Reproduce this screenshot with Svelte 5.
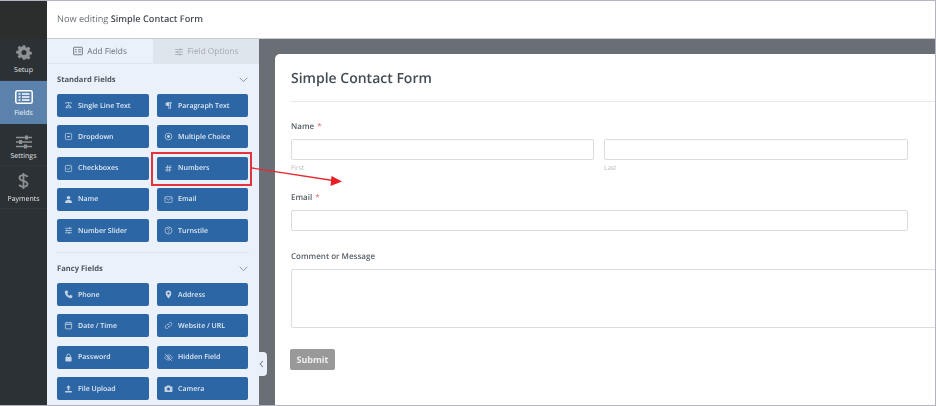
<script>
  const icons = {
    text: '<path d="M3 5V3h10v2M8 3v4M5 8h6M3 11l2 2 0-4zM13 11l-2 2 0-4zM5 11h6" fill="none" stroke="currentColor" stroke-width="1.3"/>',
    para: '<path d="M6 2h8v2h-1.500v10H11V4H9.500v10H8V9H6a3.500 3.500 0 0 1 0-7z" fill="currentColor"/>',
    drop: '<rect x="2.500" y="2.500" width="11" height="11" rx="1.500" fill="none" stroke="currentColor" stroke-width="1.300"/><path d="M5 7h6l-3 3z" fill="currentColor"/>',
    radio: '<circle cx="8" cy="8" r="6" fill="none" stroke="currentColor" stroke-width="1.300"/><circle cx="8" cy="8" r="2.600" fill="currentColor"/>',
    check: '<rect x="2.500" y="2.500" width="11" height="11" rx="1.500" fill="none" stroke="currentColor" stroke-width="1.300"/><path d="M5 8l2.200 2.200L11.500 6" fill="none" stroke="currentColor" stroke-width="1.300"/>',
    hash: '<path d="M6.500 2L5 14M11 2L9.500 14M2.500 6h11M2 10.500h11" fill="none" stroke="currentColor" stroke-width="1.400"/>',
    user: '<circle cx="8" cy="4.800" r="3.200" fill="currentColor"/><path d="M2 14v-1.500C2 10.300 4 9 6 9h4c2 0 4 1.300 4 3.500V14z" fill="currentColor"/>',
    mail: '<rect x="1.500" y="3" width="13" height="10" rx="1.200" fill="none" stroke="currentColor" stroke-width="1.200"/><path d="M2 4.500l6 4.500 6-4.500" fill="none" stroke="currentColor" stroke-width="1.200"/>',
    slider: '<path d="M2 4h12M2 8h12M2 12h12" stroke="currentColor" stroke-width="1.300"/><rect x="9" y="2.500" width="2" height="3" fill="currentColor"/><rect x="4" y="6.500" width="2" height="3" fill="currentColor"/><rect x="8" y="10.500" width="2" height="3" fill="currentColor"/>',
    help: '<circle cx="8" cy="8" r="6.200" fill="none" stroke="currentColor" stroke-width="1.300"/><path d="M6 6.500a2 2 0 1 1 3 1.700c-.7.400-1 .8-1 1.500" fill="none" stroke="currentColor" stroke-width="1.200"/><circle cx="8" cy="11.500" r=".8" fill="currentColor"/>',
    phone: '<path d="M3 1.500l3-.5 1.500 3.500L5.800 6c.7 1.700 2.400 3.400 4.200 4.200l1.500-1.700L15 10l-.5 3c-.1.800-.8 1.500-1.700 1.500C6.800 14.500 1.500 9.200 1.500 3.200c0-.9.700-1.600 1.500-1.700z" fill="currentColor"/>',
    pin: '<path fill-rule="evenodd" d="M8 1a5 5 0 0 1 5 5c0 3.200-3.500 7-5 9-1.500-2-5-5.800-5-9a5 5 0 0 1 5-5zm0 3a2 2 0 1 0 0 4 2 2 0 0 0 0-4z" fill="currentColor"/>',
    cal: '<rect x="2.500" y="3" width="11" height="11" rx="1.200" fill="none" stroke="currentColor" stroke-width="1.400"/><path d="M2.500 6h11M5 1.500V4M11 1.500V4" stroke="currentColor" stroke-width="1.500"/>',
    link: '<path d="M7 9.500a2.700 2.700 0 0 0 3.800 0l2.500-2.500a2.700 2.700 0 0 0-3.800-3.800L8.300 4.400M9 6.500a2.700 2.700 0 0 0-3.800 0L2.700 9a2.700 2.700 0 0 0 3.800 3.800l1.200-1.200" fill="none" stroke="currentColor" stroke-width="1.300"/>',
    lock: '<rect x="2.500" y="7" width="11" height="8" rx="1.200" fill="currentColor"/><path d="M5 7.500V5a3 3 0 0 1 6 0v2.500" fill="none" stroke="currentColor" stroke-width="1.600"/>',
    hidden: '<path d="M1 8c2-3 4.300-4.500 7-4.500S13 5 15 8c-2 3-4.300 4.500-7 4.500S3 11 1 8z" fill="none" stroke="currentColor" stroke-width="1.200"/><circle cx="8" cy="8" r="2.200" fill="none" stroke="currentColor" stroke-width="1.200"/><path d="M2 2l12 12" stroke="currentColor" stroke-width="1.300"/>',
    upload: '<path d="M8 2l4 4H9.500v5h-3V6H4zM2 12.500h12V15H2z" fill="currentColor"/>',
    camera: '<path fill-rule="evenodd" d="M5.500 2.500h5l1 2H14a1 1 0 0 1 1 1V13a1 1 0 0 1-1 1H2a1 1 0 0 1-1-1V5.500a1 1 0 0 1 1-1h2.500zM8 6a2.800 2.800 0 1 0 0 5.600A2.800 2.800 0 0 0 8 6z" fill="currentColor"/>'
  };
  const standard = [
    ['text', 'Single Line Text'], ['para', 'Paragraph Text'],
    ['drop', 'Dropdown'], ['radio', 'Multiple Choice'],
    ['check', 'Checkboxes'], ['hash', 'Numbers'],
    ['user', 'Name'], ['mail', 'Email'],
    ['slider', 'Number Slider'], ['help', 'Turnstile']
  ];
  const fancy = [
    ['phone', 'Phone'], ['pin', 'Address'],
    ['cal', 'Date / Time'], ['link', 'Website / URL'],
    ['lock', 'Password'], ['hidden', 'Hidden Field'],
    ['upload', 'File Upload'], ['camera', 'Camera']
  ];
</script>

<div class="shot">
  <nav class="side">
    <div class="brand"></div>
    <div class="item setup">
      <svg width="16" height="16" viewBox="0 0 24 24"><path fill-rule="evenodd" fill="#8d9194" d="M10 1h4l.6 3.100 2 .9 2.700-1.700 2.800 2.800-1.700 2.700.9 2 3.100.6v4l-3.100.6-.9 2 1.700 2.700-2.800 2.800-2.700-1.700-2 .9L14 24h-4l-.6-3.100-2-.9-2.700 1.700-2.800-2.800 1.700-2.700-.9-2L-.4 14v-4l3.100-.6.9-2L1.900 4.700 4.700 1.900l2.700 1.700 2-.9zM12 8.500a4 4 0 1 0 0 8 4 4 0 0 0 0-8z" transform="translate(.6 -.5) scale(.95)"/></svg>
      <span>Setup</span>
    </div>
    <div class="item active">
      <svg width="18" height="14" viewBox="0 0 18 14"><rect x=".8" y=".8" width="16.400" height="12.400" rx="1.500" fill="none" stroke="#fff" stroke-width="1.500"/><path d="M3.500 4h2M7 4h7.500M3.500 7h2M7 7h7.500M3.500 10h2M7 10h7.500" stroke="#fff" stroke-width="1.400"/></svg>
      <span>Fields</span>
    </div>
    <div class="item settings">
      <svg width="16" height="16" viewBox="0 0 16 16"><path d="M0 3.500h16M0 8h16M0 12.500h16" stroke="#8d9194" stroke-width="1.400"/><rect x="9" y="1.500" width="3" height="4" fill="#8d9194"/><rect x="3" y="6" width="3" height="4" fill="#8d9194"/><rect x="8" y="10.500" width="3" height="4" fill="#8d9194"/></svg>
      <span>Settings</span>
    </div>
    <div class="item tall">
      <svg width="11" height="16" viewBox="0 0 12 18"><path d="M6 0v18M10.500 4.500C9.800 3 8 2.500 6 2.500 3.500 2.500 1.500 3.500 1.500 5.500c0 4.500 9 2.300 9 7 0 2-2 3-4.500 3-2.200 0-4-.8-4.800-2.500" fill="none" stroke="#8d9194" stroke-width="2"/></svg>
      <span>Payments</span>
    </div>
  </nav>

  <div class="main">
    <header class="top">Now editing <b>Simple Contact Form</b></header>
    <div class="body">
      <aside class="panel">
        <div class="tabs">
          <div class="tab on">
            <svg width="10" height="10" viewBox="0 0 16 16"><rect x="1" y="2" width="14" height="12" rx="1" fill="none" stroke="currentColor" stroke-width="1.500"/><path d="M3 6h3M8 6h5M3 9.500h3M8 9.500h5" stroke="currentColor" stroke-width="1.500"/></svg>
            Add Fields
          </div>
          <div class="tab">
            <svg width="10" height="10" viewBox="0 0 16 16" class="dim">{@html icons.slider}</svg>
            Field Options
          </div>
        </div>
        <div class="fields">
          <div class="head"><span>Standard Fields</span><svg width="9" height="6" viewBox="0 0 9 6"><path d="M.7.8L4.500 4.600 8.300.8" fill="none" stroke="#8b96a1" stroke-width="1"/></svg></div>
          <div class="grid">
            {#each standard as [icon, label]}
              <div class="btn"><svg width="9" height="9" viewBox="0 0 16 16">{@html icons[icon]}</svg>{label}</div>
            {/each}
          </div>
          <div class="rule"></div>
          <div class="head fancy"><span>Fancy Fields</span><svg width="9" height="6" viewBox="0 0 9 6"><path d="M.7.8L4.500 4.600 8.300.8" fill="none" stroke="#8b96a1" stroke-width="1"/></svg></div>
          <div class="grid">
            {#each fancy as [icon, label]}
              <div class="btn"><svg width="9" height="9" viewBox="0 0 16 16">{@html icons[icon]}</svg>{label}</div>
            {/each}
          </div>
        </div>
      </aside>
      <section class="canvas">
        <div class="card">
          <h1>Simple Contact Form</h1>
          <div class="form">
            <div class="label first">Name <i>*</i></div>
            <div class="pair">
              <div><div class="input"></div><small>First</small></div>
              <div><div class="input"></div><small>Last</small></div>
            </div>
            <div class="label email">Email <i>*</i></div>
            <div class="input wide"></div>
            <div class="label comment">Comment or Message</div>
            <div class="area"></div>
            <div class="submit">Submit</div>
          </div>
        </div>
      </section>
    </div>
  </div>

  <div class="toggle">
    <svg width="5" height="8" viewBox="0 0 5 8"><path d="M4 .8L1 4l3 3.200" fill="none" stroke="#8b96a1" stroke-width="1.100"/></svg>
  </div>
  <div class="mark"></div>
  <svg class="arrow" width="100" height="24" viewBox="0 0 100 24">
    <path d="M1 2L82 14.500" stroke="#ea2a33" stroke-width="1.300"/>
    <path d="M91 15.500L79.500 20l1-10z" fill="#ea1c26"/>
  </svg>
  <div class="frame"></div>
</div>

<style>
  :global(body) { margin: 0; background: #fff; }
  .shot {
    position: relative; width: 936px; height: 406px; overflow: hidden; display: flex;
    font-family: "Open Sans", "Liberation Sans", sans-serif; color: #444c55;
    text-rendering: geometricPrecision; filter: blur(0.35px);
  }
  .frame {
    position: absolute; inset: 0; border: solid #b5b4bf; border-width: 1px 1px 1px 0; pointer-events: none;
  }
  .side { width: 47px; flex: none; background: #2b3135; display: flex; flex-direction: column; }
  .brand { height: 39px; background: #2c2d2d; }
  .item {
    height: 42px; display: flex; flex-direction: column; align-items: center; justify-content: flex-end;
    box-sizing: border-box; font-size: 7px; line-height: 10px; font-weight: 500;
    color: #e4e6e7; border-bottom: 1px solid #32383c;
  }
  .setup { gap: 5px; padding-bottom: 4px; }
  .active { background: #5a82ad; color: #f2f6fa; height: 43px; border-bottom: 0; padding-bottom: 5px; gap: 5px; }
  .settings { padding-bottom: 3px; gap: 2px; }
  .tall { height: 43px; padding-bottom: 3px; gap: 6px; }
  .main { flex: 1; min-width: 0; display: flex; flex-direction: column; }
  .top {
    height: 39px; flex: none; box-sizing: border-box; padding: 12px 0 0 10px; font-size: 9.2px; line-height: 14px;
    color: #6b6f73; background: #fff; border-bottom: 1px solid #c9cbce;
  }
  .top b { color: #444c55; font-weight: 600; }
  .body { flex: 1; display: flex; min-height: 0; }
  .panel { width: 212px; flex: none; background: #ebf1fa; display: flex; flex-direction: column; }
  .tabs { display: grid; grid-template-columns: 106px 106px; height: 25px; flex: none; }
  .tab {
    display: flex; align-items: center; justify-content: center; gap: 4px; font-size: 8.3px;
    color: #a3aab2; background: #dfe5ec; font-weight: 500;
  }
  .tab svg { color: #a3aab2; }
  .tab.on { background: #ebf1fa; color: #6c747c; border-bottom: 1px solid #e0e6ee; }
  .tab.on svg { color: #6c747c; }
  .fields { padding: 0 10px; }
  .head {
    display: flex; justify-content: space-between; align-items: center; height: 14px; margin-top: 8px;
    margin-bottom: 8px; font-size: 7.6px; font-weight: 700; color: #4e555c; padding-right: 1px;
    box-sizing: border-box; padding-top: 1px;
  }
  .head.fancy { margin-top: 8px; margin-bottom: 8px; }
  .grid { display: grid; grid-template-columns: 92px 91px; column-gap: 8px; row-gap: 8.3px; }
  .btn {
    height: 23px; background: #2d66a5; border-radius: 2px; color: #dfe9f3; font-size: 7px; font-weight: 600;
    display: flex; align-items: center; gap: 5px; padding: 1px 0 0 7px; box-sizing: border-box; white-space: nowrap;
  }
  .btn svg { flex: none; color: #c3d3e4; margin-top: -1px; }
  .rule { height: 1px; background: #dce3ea; margin-top: 10px; }
  .canvas { flex: 1; min-width: 0; background: #6a6f76; padding: 15px 0 0 16px; border-bottom: 1px solid #6a6f76; }
  .card { background: #fff; height: 352px; border-radius: 5px 0 0 0; padding-left: 16px; box-sizing: border-box; }
  h1 {
    margin: 0; height: 48px; box-sizing: border-box; padding-top: 15px; font-size: 14px; line-height: 20px;
    font-weight: 600; color: #444c55; border-bottom: 1px solid #e8e8e8;
  }
  .form { width: 645px; }
  .label { font-size: 8px; line-height: 11px; font-weight: 600; color: #555c63; }
  .label i { color: #d4605a; font-style: normal; font-weight: 400; margin-left: 1px; }
  .first { padding-top: 19px; }
  .pair { display: grid; grid-template-columns: 303px 304px; column-gap: 10px; margin-top: 7px; }
  .input { height: 21px; box-sizing: border-box; border: 1px solid #dcdcdc; border-radius: 2px; background: #fff; }
  small { display: block; font-size: 6.5px; line-height: 9px; color: #b5b8bb; margin-top: 3px; }
  .email { margin-top: 20px; }
  .wide { width: 617px; margin-top: 7px; }
  .comment { margin-top: 20px; }
  .area { height: 59px; margin-top: 7px; box-sizing: border-box; border: 1px solid #dcdcdc; border-radius: 2px; }
  .submit {
    width: 45px; height: 21px; margin: 21px 0 0 -1px; background: #999; border-radius: 2px; color: #eee;
    font-size: 9px; font-weight: 700; display: flex; align-items: center; justify-content: center;
  }
  .toggle {
    position: absolute; left: 258px; top: 352px; width: 9px; height: 24px; background: #ebf1fa;
    border-radius: 0 4px 4px 0; display: flex; align-items: center; padding-left: 1px; box-sizing: border-box;
  }
  .mark { position: absolute; left: 151px; top: 152px; width: 101px; height: 34px; box-sizing: border-box; border: 2px solid #e3333c; }
  .arrow { position: absolute; left: 251px; top: 166px; }
</style>
